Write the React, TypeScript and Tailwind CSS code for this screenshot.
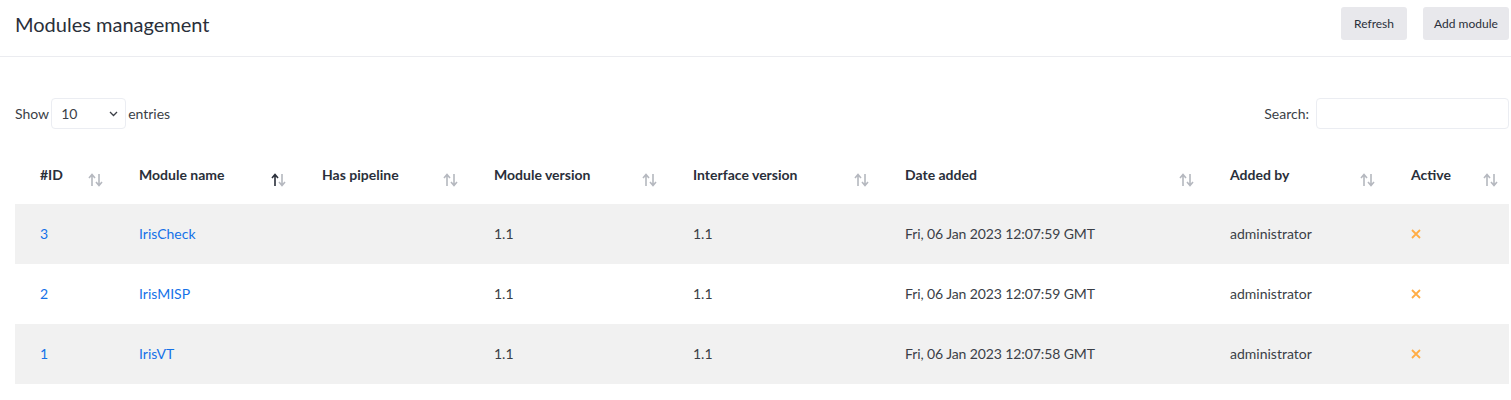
import { useState } from "react";

type Module = { id: number; name: string; pipeline: string; version: string; iface: string; added: string; by: string };

const modules: Module[] = [
  { id: 3, name: "IrisCheck", pipeline: "", version: "1.1", iface: "1.1", added: "Fri, 06 Jan 2023 12:07:59 GMT", by: "administrator" },
  { id: 2, name: "IrisMISP", pipeline: "", version: "1.1", iface: "1.1", added: "Fri, 06 Jan 2023 12:07:59 GMT", by: "administrator" },
  { id: 1, name: "IrisVT", pipeline: "", version: "1.1", iface: "1.1", added: "Fri, 06 Jan 2023 12:07:58 GMT", by: "administrator" },
];

const columns = [
  { label: "#ID", width: 99 },
  { label: "Module name", width: 183, active: true },
  { label: "Has pipeline", width: 172 },
  { label: "Module version", width: 199 },
  { label: "Interface version", width: 212 },
  { label: "Date added", width: 325 },
  { label: "Added by", width: 181 },
  { label: "Active", width: 123 },
];

function SortIcon({ active }: { active?: boolean }) {
  const up = active ? "#2a2f3a" : "#b5b8bf";
  return (
    <svg width="16" height="14" viewBox="0 0 16 14" className="mt-[8px] shrink-0">
      <path d="M4 13V2M1 5l3-3.5L7 5" fill="none" stroke={up} strokeWidth="1.6" />
      <path d="M11 1v11M8 9l3 3.5L14 9" fill="none" stroke="#b5b8bf" strokeWidth="1.6" />
    </svg>
  );
}

function Cross() {
  return (
    <svg width="10" height="10" viewBox="0 0 10 10" className="mt-[2px]">
      <path d="M1 1l8 8M9 1l-8 8" stroke="#ffad46" strokeWidth="1.8" />
    </svg>
  );
}

export default function App() {
  const [search, setSearch] = useState("");
  const rows = modules.filter((m) => m.name.toLowerCase().includes(search.toLowerCase()));

  return (
    <div className="min-h-[400px] bg-white text-[14px] text-[#3b3f47]" style={{ fontFamily: "Lato, 'Open Sans', sans-serif" }}>
      <div className="flex h-[57px] items-center justify-between border-b border-[#ebecf0] pl-[15px] pr-[2px]">
        <h1 className="pb-[8px] text-[20px] text-[#2a2f3a]">Modules management</h1>
        <div className="flex gap-[16px] pb-[9px]">
          <button className="h-[33px] w-[66px] rounded-[3px] bg-[#e8e8ec] text-[12px] text-[#2a2f3a]">Refresh</button>
          <button className="h-[33px] w-[86px] rounded-[3px] bg-[#e8e8ec] text-[12px] text-[#2a2f3a]">Add module</button>
        </div>
      </div>

      <div className="pl-[15px] pr-[2px]">
        <div className="mt-[41px] flex items-center justify-between">
          <div className="flex items-center gap-[2px]">
            <span>Show</span>
            <div className="flex h-[31px] w-[75px] items-center justify-between rounded-[4px] border border-[#ebedf2] pl-[9px] pr-[7px]">
              <span>10</span>
              <svg width="9" height="6" viewBox="0 0 9 6"><path d="M1 1l3.5 3.5L8 1" fill="none" stroke="#3b3f47" strokeWidth="1.3" /></svg>
            </div>
            <span>entries</span>
          </div>
          <div className="flex items-center gap-[7px]">
            <span>Search:</span>
            <input value={search} onChange={(e) => setSearch(e.target.value)} className="h-[31px] w-[193px] rounded-[4px] border border-[#ebedf2] px-2 outline-none" />
          </div>
        </div>

        <table className="mt-[15px] w-full table-fixed border-collapse">
          <colgroup>
            {columns.map((c) => <col key={c.label} style={{ width: c.width }} />)}
          </colgroup>
          <thead>
            <tr className="h-[60px]">
              {columns.map((c) => (
                <th key={c.label} className="pl-[25px] pr-[10px] pt-[3px] text-left font-bold text-[#2a2f3a]">
                  <div className="flex items-start justify-between">
                    <span className="leading-[20px]">{c.label}</span>
                    <SortIcon active={c.active} />
                  </div>
                </th>
              ))}
            </tr>
          </thead>
          <tbody>
            {rows.map((m, i) => (
              <tr key={m.id} className={`h-[60px] ${i % 2 === 0 ? "bg-[#f1f1f1]" : "bg-white"}`}>
                <td className="pb-[2px] pl-[25px] text-[#1572e8]">{m.id}</td>
                <td className="pb-[2px] pl-[25px] text-[#1572e8]">{m.name}</td>
                <td className="pb-[2px] pl-[25px]">{m.pipeline}</td>
                <td className="pb-[2px] pl-[25px]">{m.version}</td>
                <td className="pb-[2px] pl-[25px]">{m.iface}</td>
                <td className="pb-[2px] pl-[25px] tracking-[-0.1px]">{m.added}</td>
                <td className="pb-[2px] pl-[25px]">{m.by}</td>
                <td className="pb-[2px] pl-[25px]"><Cross /></td>
              </tr>
            ))}
          </tbody>
        </table>
      </div>
    </div>
  );
}
